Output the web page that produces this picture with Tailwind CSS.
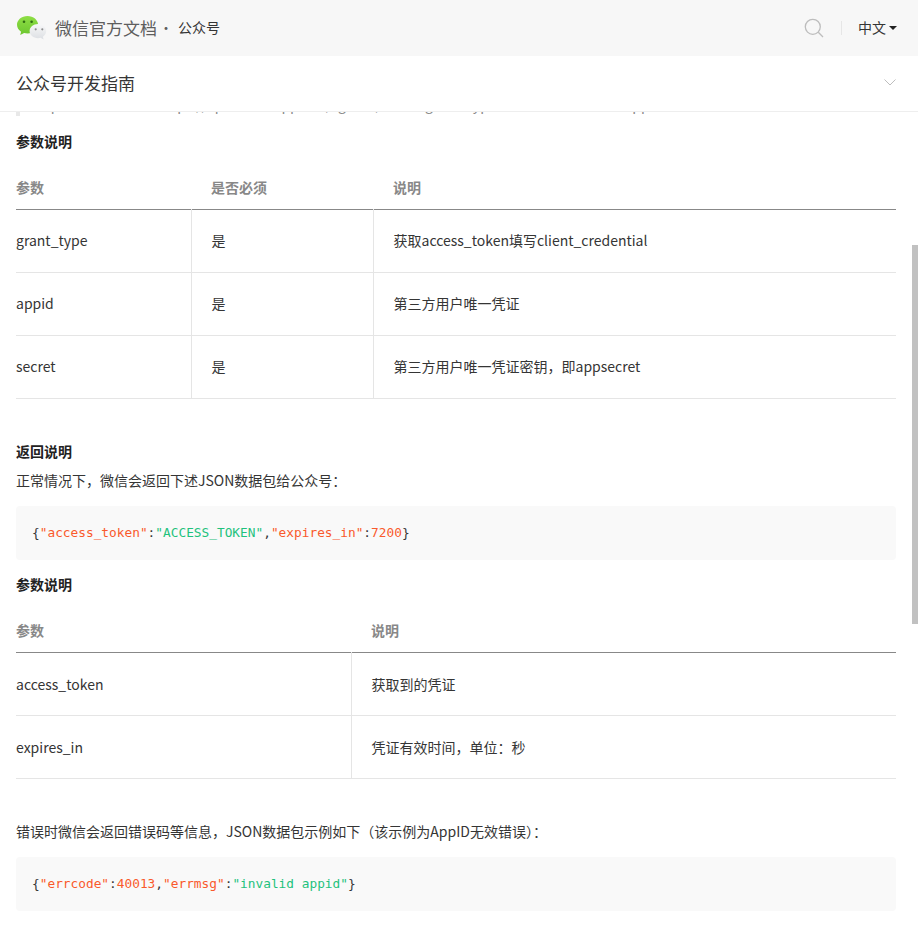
<!DOCTYPE html>
<html lang="zh-CN">
<head>
<meta charset="utf-8">
<script src="https://cdn.jsdelivr.net/npm/@tailwindcss/browser@4"></script>
</head>
<body class="bg-white font-['Noto_Sans_CJK_SC','Noto_Sans',sans-serif] text-[14px] text-[#353535]">
<div class="relative h-[927px] w-[918px] overflow-hidden">
  <header class="flex h-14 items-center bg-[#f7f7f7] pb-[2px] pl-4 pr-[21px]">
    <svg width="32" height="26" viewBox="0 0 32 26" class="mt-[2px] shrink-0">
      <defs><linearGradient id="g" x1="0" y1="0" x2="0" y2="1"><stop offset="0" stop-color="#8ede45"/><stop offset="1" stop-color="#6cc62f"/></linearGradient><linearGradient id="w" x1="0" y1="0" x2="0" y2="1"><stop offset="0" stop-color="#f8f8f9"/><stop offset="1" stop-color="#dcdfe3"/></linearGradient></defs>
      <path d="M11.500 1C5.600 1 1 5 1 9.800c0 2.900 1.600 5.300 4.100 6.900l-.9 3.400 3.900-2.100c1.100.3 2.200.5 3.400.5 5.900 0 10.600-3.900 10.600-8.700S17.400 1 11.500 1z" fill="url(#g)"/>
      <circle cx="8" cy="6.700" r="1.300" fill="#2f6d12"/><circle cx="15.600" cy="6.700" r="1.300" fill="#2f6d12"/>
      <path d="M22 9c-4.700 0-8.400 3.200-8.400 7.100s3.700 7.100 8.400 7.100c.9 0 1.800-.1 2.600-.4l3 1.600-.7-2.600c2-1.300 3.300-3.400 3.300-5.700C30.200 12.200 26.600 9 22 9z" fill="url(#w)"/>
      <circle cx="19.700" cy="14.300" r="1.100" fill="#8f8f8f"/><circle cx="26.300" cy="14.300" r="1.100" fill="#8f8f8f"/>
    </svg>
    <span class="ml-[7px] text-[17px] leading-none text-[#5e5e5e]">微信官方文档</span>
    <span class="ml-[2px] w-[14px] text-[14px] leading-none text-[#5e5e5e]">·</span>
    <span class="ml-[5px] text-[14px] leading-none text-[#353535]">公众号</span>
    <svg width="20" height="20" viewBox="0 0 20 20" class="mt-[2px] ml-auto" fill="none" stroke="#bdbdbd" stroke-width="1.300"><circle cx="8.800" cy="8.800" r="7.500"/><path d="M14.300 14.300l4.700 4.700"/></svg>
    <span class="mt-[2px] ml-[17px] h-[14px] w-px bg-[#e6e6e6]"></span>
    <span class="ml-4 text-[14px] leading-none text-[#353535]">中文</span>
    <span class="mt-[2px] ml-[3px] h-0 w-0 border-x-[4px] border-t-[4px] border-x-transparent border-t-[#222]"></span>
  </header>
  <div class="flex h-14 items-center justify-between border-b border-[#eeeeee] pb-[2px] pl-4 pr-[22px]">
    <span class="text-[17px] leading-none text-[#353535]">公众号开发指南</span>
    <svg width="12" height="7" viewBox="0 0 12 7" fill="none" stroke="#bdbdbd" stroke-width="1"><path d="M.5.5 6 6 11.500.5"/></svg>
  </div>
  <main class="h-[816px] overflow-hidden pl-4 pr-[22px]">
    <blockquote class="h-[4px] overflow-hidden border-l-4 border-[#e8e8e8] pl-3">
      <p class="-mt-[18px] text-[14px] leading-[20px] whitespace-nowrap text-[#888]">https请求方式: GET https://api.weixin.qq.com/cgi-bin/token?grant_type=client_credential&amp;appid=APPID&amp;secret=APPSECRET</p>
    </blockquote>
    <h4 class="mt-[13px] text-[14px] leading-[24px] font-bold text-[#222]">参数说明</h4>
    <table class="mt-[13px] w-full table-fixed border-collapse">
      <thead><tr class="h-[43px] border-b border-[#888] text-[14px] text-[#888]">
        <th class="w-[175px] text-left font-bold">参数</th><th class="w-[182px] pl-5 text-left font-bold">是否必须</th><th class="pl-5 text-left font-bold">说明</th>
      </tr></thead>
      <tbody>
        <tr class="h-[63px] border-b border-[#e5e5e5]"><td>grant_type</td><td class="border-x border-[#e5e5e5] pl-5">是</td><td class="pl-5">获取access_token填写client_credential</td></tr>
        <tr class="h-[63px] border-b border-[#e5e5e5]"><td>appid</td><td class="border-x border-[#e5e5e5] pl-5">是</td><td class="pl-5">第三方用户唯一凭证</td></tr>
        <tr class="h-[63px] border-b border-[#e5e5e5]"><td>secret</td><td class="border-x border-[#e5e5e5] pl-5">是</td><td class="pl-5">第三方用户唯一凭证密钥，即appsecret</td></tr>
      </tbody>
    </table>
    <h4 class="mt-[40px] text-[14px] leading-[24px] font-bold text-[#222]">返回说明</h4>
    <p class="mt-[5px] text-[14px] leading-[24px] text-[#353535]">正常情况下，微信会返回下述JSON数据包给公众号：</p>
    <pre class="mt-[14px] flex h-[54px] items-center rounded-sm bg-[#f9f9f9] px-4 font-['DejaVu_Sans_Mono',monospace] text-[12.8px] text-[#353535]">{<span class="text-[#f95a2c]">"access_token"</span>:<span class="text-[#1fc27d]">"ACCESS_TOKEN"</span>,<span class="text-[#f95a2c]">"expires_in"</span>:<span class="text-[#f95a2c]">7200</span>}</pre>
    <h4 class="mt-[12px] text-[14px] leading-[24px] font-bold text-[#222]">参数说明</h4>
    <table class="mt-[14px] w-full table-fixed border-collapse">
      <thead><tr class="h-[43px] border-b border-[#888] text-[14px] text-[#888]">
        <th class="w-[335px] text-left font-bold">参数</th><th class="pl-5 text-left font-bold">说明</th>
      </tr></thead>
      <tbody>
        <tr class="h-[63px] border-b border-[#e5e5e5]"><td>access_token</td><td class="border-l border-[#e5e5e5] pl-5">获取到的凭证</td></tr>
        <tr class="h-[63px] border-b border-[#e5e5e5]"><td>expires_in</td><td class="border-l border-[#e5e5e5] pl-5">凭证有效时间，单位：秒</td></tr>
      </tbody>
    </table>
    <p class="mt-[40px] text-[14px] leading-[24px] text-[#353535]">错误时微信会返回错误码等信息，JSON数据包示例如下（该示例为AppID无效错误）：</p>
    <pre class="mt-[14px] flex h-[54px] items-center rounded-sm bg-[#f9f9f9] px-4 font-['DejaVu_Sans_Mono',monospace] text-[12.8px] text-[#353535]">{<span class="text-[#f95a2c]">"errcode"</span>:<span class="text-[#f95a2c]">40013</span>,<span class="text-[#f95a2c]">"errmsg"</span>:<span class="text-[#1fc27d]">"invalid appid"</span>}</pre>
  </main>
  <div class="absolute top-[245px] right-0 h-[379px] w-[6px] bg-[#c1c1c1]"></div>
</div>
</body>
</html>
